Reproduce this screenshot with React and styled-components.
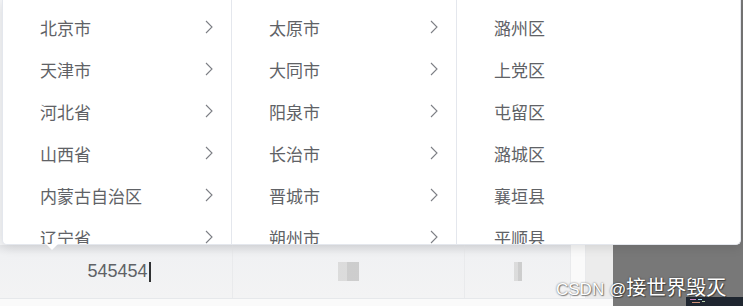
import React from 'react'
import styled, { createGlobalStyle } from 'styled-components'

const GlobalStyle = createGlobalStyle`
  html, body {
    margin: 0;
    padding: 0;
    background: #fff;
  }
  body {
    font-family: "Liberation Sans", "Noto Sans CJK SC", sans-serif;
  }
`

const Page = styled.div`
  position: relative;
  width: 743px;
  height: 306px;
  display: flex;
  overflow: hidden;
`

const Main = styled.div`
  width: 613px;
  display: flex;
  flex-direction: column;
  background: #fafafa;
`

const Filler = styled.div`
  height: 245px;
  background: #f5f6f8;
`

const TableRow = styled.div`
  height: 53px;
  display: grid;
  grid-template-columns: 233px 232px 106px 15px 1fr;
  border-bottom: 1px solid #e6e8eb;
  background: linear-gradient(#e6e7ea 0px, #f0f1f3 10px, #f3f3f4 100%);
`

const Cell = styled.div`
  display: flex;
  align-items: center;
  justify-content: center;
  padding-left: ${p => p.$shift || 0}px;
  border-right: 1px solid ${p => (p.$last ? 'transparent' : '#e9eaec')};
  background: ${p => p.$bg || 'transparent'};
  font-size: 18px;
  color: #606266;
`

const Caret = styled.span`
  display: inline-block;
  width: 2px;
  height: 20px;
  margin-left: 1px;
  background: #303133;
`

const Masked = styled.div`
  width: ${p => p.$w}px;
  height: 19px;
  background: linear-gradient(90deg, #d6d6d6 0 45%, #c4c4c4 45% 100%);
  opacity: 0.8;
`

const Side = styled.div`
  flex: 1;
  background: #787878;
`

const Panel = styled.div`
  position: absolute;
  top: 0;
  left: 2px;
  width: 739px;
  height: 245px;
  display: flex;
  background: #fff;
  border: 1px solid #e4e7ed;
  border-top: none;
  border-radius: 0 0 5px 5px;
  box-shadow: 0 2px 12px rgba(0, 0, 0, 0.12);
  box-sizing: border-box;
  overflow: hidden;
  font-family: "Noto Sans CJK SC", sans-serif;
`

const Arrow = styled.div`
  position: absolute;
  top: 244px;
  left: 46px;
  width: 0;
  height: 0;
  border-left: 6px solid transparent;
  border-right: 6px solid transparent;
  border-top: 6px solid #fff;
`

const Menu = styled.ul`
  margin: 0;
  padding: 6px 0 0;
  list-style: none;
  box-sizing: border-box;
  width: ${p => (p.$w ? `${p.$w}px` : 'auto')};
  flex: ${p => (p.$w ? 'none' : 1)};
  border-right: ${p => (p.$w ? '1px solid #e4e7ed' : 'none')};
`

const Item = styled.li`
  height: 42px;
  padding: 0 18px 0 37px;
  display: flex;
  align-items: center;
  justify-content: space-between;
  font-size: 17px;
  color: #606266;
  white-space: nowrap;
`

const Watermark = styled.div`
  position: absolute;
  left: 556px;
  top: 276px;
  color: #fff;
  font-size: 20px;
  line-height: 22px;
  text-shadow: 0 0 2px rgba(0, 0, 0, 0.6), 1px 1px 1px rgba(0, 0, 0, 0.4);
  font-family: "Noto Sans CJK SC", sans-serif;
  span {
    font-family: "Liberation Sans", sans-serif;
    font-size: 17px;
  }
`

const Thumb = styled.svg`
  position: absolute;
  left: 686px;
  top: 297px;
`

const Chevron = () => (
  <svg width="8" height="14" viewBox="0 0 8 14">
    <polyline points="1,1 7,7 1,13" fill="none" stroke="#7d7f85" strokeWidth="1.1" />
  </svg>
)

const provinces = ['北京市', '天津市', '河北省', '山西省', '内蒙古自治区', '辽宁省']
const cities = ['太原市', '大同市', '阳泉市', '长治市', '晋城市', '朔州市']
const districts = ['潞州区', '上党区', '屯留区', '潞城区', '襄垣县', '平顺县']

export default function App() {
  return (
    <>
      <GlobalStyle />
      <Page>
        <Main>
          <Filler />
          <TableRow>
            <Cell $shift={6}>
              545454<Caret />
            </Cell>
            <Cell>
              <Masked $w={21} />
            </Cell>
            <Cell>
              <Masked $w={8} />
            </Cell>
            <Cell $bg="#fafafa" />
            <Cell $last $bg="#ececec" />
          </TableRow>
        </Main>
        <Side />

        <Panel>
          <Menu $w={229}>
            {provinces.map(p => (
              <Item key={p}>
                {p}
                <Chevron />
              </Item>
            ))}
          </Menu>
          <Menu $w={225}>
            {cities.map(c => (
              <Item key={c}>
                {c}
                <Chevron />
              </Item>
            ))}
          </Menu>
          <Menu>
            {districts.map(d => (
              <Item key={d}>{d}</Item>
            ))}
          </Menu>
        </Panel>
        <Arrow />

        <Watermark>
          <span>CSDN @</span>接世界毁灭
        </Watermark>
        <Thumb width="57" height="9" viewBox="0 0 57 9">
          <rect width="57" height="9" fill="#1f2630" />
          <rect x="4" y="2" width="6" height="1" fill="#c586c0" />
          <rect x="12" y="2" width="4" height="1" fill="#9cdcfe" />
          <rect x="6" y="5" width="8" height="1" fill="#ce9178" />
          <rect x="16" y="4" width="3" height="1" fill="#b5cea8" />
        </Thumb>
      </Page>
    </>
  )
}
